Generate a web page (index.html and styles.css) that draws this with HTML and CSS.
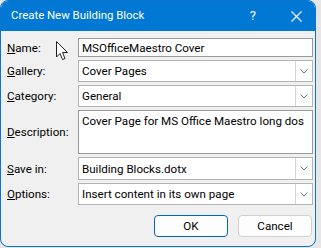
FILE: index.html
```html
<!DOCTYPE html>
<html lang="en">
<head>
    <meta charset="UTF-8">
    <title>Create New Building Block</title>
    <link rel="stylesheet" href="styles.css">
</head>
<body>
    <div class="dialog">
        <div class="titlebar">
            <span class="title">Create New Building Block</span>
            <span class="help">?</span>
            <svg class="close" width="11" height="11" viewBox="0 0 11 11">
                <path d="M0.5 0.5 L10.5 10.5 M10.5 0.5 L0.5 10.5" stroke="#fff" stroke-width="1.1"/>
            </svg>
        </div>
        <div class="content">
            <div class="form">
                <label class="lbl"><u>N</u>ame:</label>
                <div class="field text">MSOfficeMaestro Cover</div>

                <label class="lbl"><u>G</u>allery:</label>
                <div class="field combo"><span>Cover Pages</span><span class="drop"><svg width="8" height="5" viewBox="0 0 8 5"><path d="M0.5 0.5 L4 4 L7.5 0.5" fill="none" stroke="#777" stroke-width="1"/></svg></span></div>

                <label class="lbl"><u>C</u>ategory:</label>
                <div class="field combo"><span>General</span><span class="drop"><svg width="8" height="5" viewBox="0 0 8 5"><path d="M0.5 0.5 L4 4 L7.5 0.5" fill="none" stroke="#777" stroke-width="1"/></svg></span></div>

                <label class="lbl lbl-desc"><u>D</u>escription:</label>
                <div class="field area">Cover Page for MS Office Maestro long dos</div>

                <label class="lbl"><u>S</u>ave in:</label>
                <div class="field combo"><span>Building Blocks.dotx</span><span class="drop"><svg width="8" height="5" viewBox="0 0 8 5"><path d="M0.5 0.5 L4 4 L7.5 0.5" fill="none" stroke="#777" stroke-width="1"/></svg></span></div>

                <label class="lbl"><u>O</u>ptions:</label>
                <div class="field combo"><span>Insert content in its own page</span><span class="drop"><svg width="8" height="5" viewBox="0 0 8 5"><path d="M0.5 0.5 L4 4 L7.5 0.5" fill="none" stroke="#777" stroke-width="1"/></svg></span></div>
            </div>
            <div class="buttons">
                <button class="btn btn-ok">OK</button>
                <button class="btn">Cancel</button>
            </div>
        </div>
        <svg class="cursor" width="13" height="20" viewBox="0 0 13 20">
            <path d="M0.5 0.5 L0.5 16 L4 12.5 L6.5 18.5 L9 17.5 L6.5 11.5 L11.5 11.5 Z" fill="#fff" stroke="#222" stroke-width="1"/>
        </svg>
    </div>
</body>
</html>
```

FILE: styles.css
```css
body {
    margin: 0;
    background-color: #e6e6e6;
    font-family: Roboto, "Noto Sans", sans-serif;
    font-size: 11.6px;
    color: #000;
}

.dialog {
    position: relative;
    width: 314px;
    height: 245px;
    border: 1px solid #0b74d0;
    border-radius: 8px;
    background-color: #f0f0f0;
    overflow: hidden;
    display: flex;
    flex-direction: column;
}

.titlebar {
    height: 30px;
    background-color: #0078d4;
    color: #fff;
    display: flex;
    align-items: center;
    padding-left: 10px;
}

.title {
    flex: 1;
    font-size: 11.4px;
    padding-bottom: 2px;
}

.help {
    font-size: 13px;
    margin-right: 35px;
    padding-bottom: 2px;
}

.close {
    margin-right: 13px;
}

.content {
    flex: 1;
    padding: 7px 2px 0 6px;
}

.form {
    display: grid;
    grid-template-columns: 71px 235px;
    grid-template-rows: 19px 22px 22px 44px 23px 22px;
    row-gap: 3px;
}

.lbl {
    display: flex;
    align-items: center;
}

.field {
    box-sizing: border-box;
    background-color: #fff;
    border: 1px solid #9a9a9a;
    padding-left: 3px;
    display: flex;
    align-items: center;
}

.combo {
    border-color: #b4b4b4;
    justify-content: space-between;
}

.drop {
    box-sizing: border-box;
    width: 17px;
    height: 100%;
    border-left: 1px solid #d4d4d4;
    display: flex;
    align-items: center;
    justify-content: center;
}

.area {
    align-items: flex-start;
    padding-top: 3px;
}

.buttons {
    display: flex;
    justify-content: flex-end;
    gap: 10px;
    margin-top: 10px;
    padding-right: 1px;
}

.btn {
    box-sizing: border-box;
    width: 74px;
    height: 22px;
    background-color: #fdfdfd;
    border: 1px solid #d0d0d0;
    border-radius: 4px;
    font-family: inherit;
    font-size: 11.6px;
    color: #000;
    padding: 0;
}

.btn-ok {
    border: 1px solid #0067c0;
}

.cursor {
    position: absolute;
    left: 55px;
    top: 40px;
}
```
